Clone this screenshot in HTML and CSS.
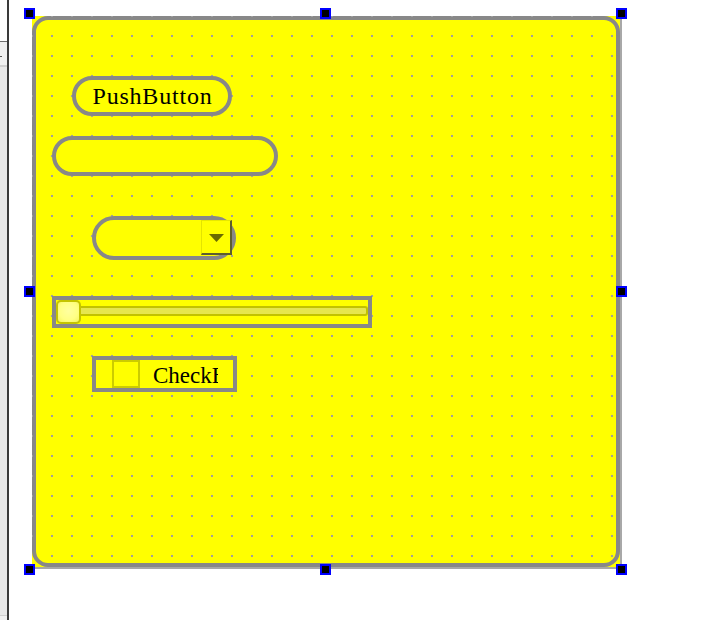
FILE: index.html
```html
<!DOCTYPE html>
<html>
<head>
<meta charset="utf-8">
<title>Form</title>
<link rel="stylesheet" href="styles.css">
</head>
<body>
<div class="app">
  <aside class="side">
    <div class="side-top"></div>
    <div class="side-tab"><span class="side-mark"></span></div>
    <div class="side-body"></div>
    <div class="side-foot"></div>
  </aside>
  <div class="divider"></div>
  <main class="canvas">
    <div class="form">
      <div class="frame">
        <div class="w pushbutton">PushButton</div>
        <div class="w lineedit"></div>
        <div class="w combo">
          <span class="combo-drop">
            <svg class="arrow" width="15" height="8" viewBox="0 0 15 8"><polygon points="0,0 15,0 7.5,8" fill="#6b6b00"/></svg>
          </span>
        </div>
        <div class="w slider">
          <div class="groove"></div>
          <div class="knob"></div>
        </div>
        <div class="w checkbox">
          <span class="indicator"></span>
          <span class="cb-text">CheckBox</span>
        </div>
      </div>
    </div>
  </main>
  <span class="sel sel-tl"></span>
  <span class="sel sel-tm"></span>
  <span class="sel sel-tr"></span>
  <span class="sel sel-ml"></span>
  <span class="sel sel-mr"></span>
  <span class="sel sel-bl"></span>
  <span class="sel sel-bm"></span>
  <span class="sel sel-br"></span>
</div>
</body>
</html>
```

FILE: styles.css
```css
body {
  margin: 0;
  background: #ffffff;
  font-family: "Liberation Serif", "Times New Roman", serif;
  color: #000;
}

.app {
  position: relative;
  display: flex;
  width: 715px;
  height: 620px;
  overflow: hidden;
}

/* left dock strip */
.side {
  width: 7px;
  display: flex;
  flex-direction: column;
  background: #e8e8e8;
}
.side-top {
  height: 41px;
  background: #ffffff;
  border-bottom: 1px solid #6e6e6e;
}
.side-tab {
  height: 25px;
  box-sizing: border-box;
  padding-top: 14px;
  background: #f0f0f0;
  border-bottom: 2px solid #d0d0d0;
}
.side-mark {
  display: block;
  width: 2px;
  height: 1px;
  background: #555;
}
.side-body {
  flex: 1;
}
.side-foot {
  height: 4px;
  border-top: 1px solid #cfcfcf;
  background: #f0f0f0;
}

.divider {
  width: 2px;
  background: #3a3a3a;
}

.canvas {
  flex: 1;
}

/* the designer form */
.form {
  margin: 16px 0 0 23px;
  width: 588px;
  height: 551px;
  background: #ffff00;
  box-shadow: 2px 2px 0 #a8a8a8;
}
.frame {
  position: relative;
  box-sizing: border-box;
  height: 100%;
  border: 4px solid #888888;
  border-radius: 16px;
  display: flex;
  flex-direction: column;
  align-items: flex-start;
}
.frame::before {
  content: "";
  position: absolute;
  inset: -4px;
  border-radius: 16px;
  background-image: conic-gradient(at 2px 2px, transparent 75%, #a0a0a0 0);
  background-size: 20px 20px;
  background-position: -1px -1px;
}

.w {
  position: relative;
  flex: none;
  box-sizing: border-box;
  border: 4px solid #888888;
  background: #ffff00;
}

.pushbutton {
  margin: 56px 0 0 36px;
  width: 160px;
  height: 40px;
  border-radius: 20px;
  display: flex;
  align-items: center;
  justify-content: center;
  padding-left: 1px;
  font-size: 24px;
  letter-spacing: 0.8px;
  white-space: nowrap;
}

.lineedit {
  margin: 20px 0 0 16px;
  width: 226px;
  height: 40px;
  border-radius: 20px;
}

.combo {
  margin: 40px 0 0 56px;
  width: 144px;
  height: 44px;
  border-radius: 22px;
  display: flex;
  justify-content: flex-end;
  align-items: flex-start;
}
.combo-drop {
  box-sizing: border-box;
  width: 31px;
  height: 35px;
  background: #ffff00;
  border-top: 1px solid #e8e800;
  border-left: 1px solid #e4e400;
  border-right: 2px solid #5e5e2e;
  border-bottom: 2px solid #5e5e2e;
  display: flex;
  align-items: center;
  justify-content: center;
}
.arrow {
  display: block;
  margin-top: 1px;
}

.slider {
  margin: 36px 0 0 16px;
  width: 320px;
  height: 32px;
  display: flex;
  align-items: center;
}
.groove {
  flex: 1;
  box-sizing: border-box;
  height: 10px;
  margin-top: -2px;
  border: 2px solid #c2c200;
  border-radius: 3px;
  background: #e6e64e;
}
.knob {
  position: absolute;
  left: 0;
  top: 0;
  box-sizing: border-box;
  width: 25px;
  height: 24px;
  border: 2px solid #c4c400;
  border-radius: 5px;
  background: radial-gradient(circle at 50% 45%, #ffffa0 0%, #ffff84 60%, #f4f460 100%);
}

.checkbox {
  margin: 28px 0 0 56px;
  width: 145px;
  height: 36px;
  display: flex;
  align-items: center;
}
.indicator {
  flex: none;
  box-sizing: border-box;
  margin-left: 16px;
  width: 28px;
  height: 28px;
  border: 2px solid #cccc00;
  background: #ffff00;
}
.cb-text {
  flex: none;
  margin-left: 13px;
  width: 65px;
  padding-top: 4px;
  overflow: hidden;
  white-space: nowrap;
  font-size: 23px;
}

/* selection handles */
.sel {
  position: absolute;
  width: 11px;
  height: 11px;
  box-sizing: border-box;
  border: 2px solid #0000ff;
  background: #000000;
}
.sel-tl { left: 24px; top: 8px; }
.sel-tm { left: 320px; top: 8px; }
.sel-tr { left: 616px; top: 8px; }
.sel-ml { left: 24px; top: 286px; }
.sel-mr { left: 616px; top: 286px; }
.sel-bl { left: 24px; top: 564px; }
.sel-bm { left: 320px; top: 564px; }
.sel-br { left: 616px; top: 564px; }
```
